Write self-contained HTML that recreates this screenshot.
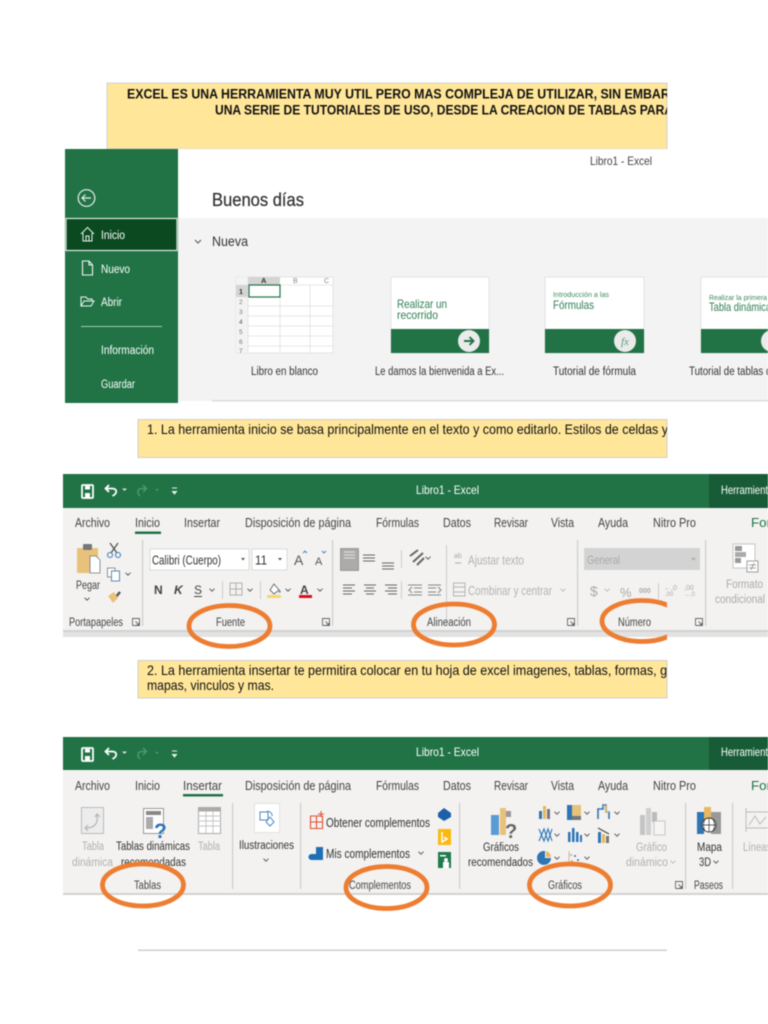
<!DOCTYPE html>
<html lang="es">
<head>
<meta charset="utf-8">
<title>Excel</title>
<style>
html,body{margin:0;padding:0;background:#fff;width:768px;height:1024px;overflow:hidden}
svg{display:block;position:absolute;left:0;top:0;filter:blur(.5px)}
text{font-family:"Liberation Sans",sans-serif;fill:#444;font-size:12px}
text.y{fill:#111;font-size:13.5px}
.w{fill:#fff}
.t{font-size:12.5px;fill:#444}
</style>
</head>
<body>
<svg width="768" height="1024" viewBox="0 0 768 1024" xmlns="http://www.w3.org/2000/svg">
<defs>
<clipPath id="cp"><rect x="0" y="0" width="667" height="1024"/></clipPath>
<path id="c" d="M-2.5-1.300L0 1.200L2.500-1.300" fill="none" stroke="#555" stroke-width="1"/>
<path id="cd" d="M-2.5-1.300L0 1.200L2.500-1.300" fill="none" stroke="#bbb" stroke-width="1"/>
<g id="l" fill="none" stroke="#666" stroke-width=".9"><path d="M-3.500 3.500V-3.500H3.500V3.500H-3.500"/><path d="M-.5-.5L3 3M3 .5V3H.5"/></g>
<g id="qa">
<rect x="82" y="0" width="11" height="13" rx="1" fill="none" stroke="#fff" stroke-width="1.800"/>
<rect x="85" y="1" width="5" height="3.500" fill="#fff"/>
<rect x="85" y="8" width="5" height="5" fill="#fff"/>
<path d="M109 0L105.500 3.500L109 7M106 3.500H112C117 3.500 118 8 112.500 11" fill="none" stroke="#fff" stroke-width="1.800"/>
<path d="M122 3.500L124.500 6L127 3.500" fill="#cfe0d6"/>
<path d="M143 0L146.500 3.500L143 7M146 3.500H142C137 3.500 137 8 140 11" fill="none" stroke="#4f9670" stroke-width="1.500"/>
<path d="M155 4L157 6L159 4" fill="#4f9670"/>
<path d="M172 3H177M172 6L174.500 9L177 6" fill="#e8f0eb" stroke="#e8f0eb" stroke-width=".9"/>
</g>
</defs>

<!-- TOP BOX -->
<rect x="107" y="83" width="560" height="66" fill="#ffe699" stroke="#d2d2d2" stroke-width="1"/>
<g clip-path="url(#cp)">
<text class="y" x="127" y="98.500" font-weight="700" textLength="562" lengthAdjust="spacingAndGlyphs">EXCEL ES UNA HERRAMIENTA MUY UTIL PERO MAS COMPLEJA DE UTILIZAR, SIN EMBARGO</text>
<text class="y" x="215" y="114.500" font-weight="700" textLength="458" lengthAdjust="spacingAndGlyphs">UNA SERIE DE TUTORIALES DE USO, DESDE LA CREACION DE TABLAS PARA</text>
</g>

<!-- START SCREEN -->
<rect x="178" y="149" width="590" height="69" fill="#fff"/>
<rect x="178" y="218" width="590" height="183" fill="#f3f3f3"/>
<rect x="212" y="400" width="556" height="1.500" fill="#dcdcdc"/>
<rect x="65" y="149" width="113" height="254" fill="#217346"/>
<rect x="66" y="218.500" width="111" height="32" fill="#0b4a20" stroke="#dfeae3" stroke-width="1.200"/>
<circle cx="86.500" cy="198" r="8.300" fill="none" stroke="#e8f0eb" stroke-width="1.200"/>
<path d="M91 198H82M85.500 194.500L82 198L85.500 201.500" fill="none" stroke="#e8f0eb" stroke-width="1.200"/>
<path d="M81 234L87.500 227.500L94 234M83 233V241H92V233M86 241V236H89V241" fill="none" stroke="#e8f0eb" stroke-width="1"/>
<text class="w" x="101" y="239" textLength="24" lengthAdjust="spacingAndGlyphs" style="font-size:11.500px;fill:#fff">Inicio</text>
<path d="M82.500 261H89L92.500 265V275H82.500ZM89 261V265H92.500" fill="none" stroke="#f0f5f2" stroke-width="1.100"/>
<text class="w" x="101" y="273" textLength="29" lengthAdjust="spacingAndGlyphs" style="font-size:11.500px;fill:#fff">Nuevo</text>
<path d="M81 306V297H86L87.500 299H92V301M81 306L84 301H94L91 306Z" fill="none" stroke="#f0f5f2" stroke-width="1"/>
<text class="w" x="101" y="306" textLength="21" lengthAdjust="spacingAndGlyphs" style="font-size:11.500px;fill:#fff">Abrir</text>
<rect x="81" y="326" width="81" height="1" fill="#a5c8b3"/>
<text class="w" x="101" y="354" textLength="53" lengthAdjust="spacingAndGlyphs" style="font-size:11.500px;fill:#fff">Información</text>
<text class="w" x="101" y="388" textLength="34" lengthAdjust="spacingAndGlyphs" style="font-size:11.500px;fill:#fff">Guardar</text>

<text x="590" y="165" textLength="62" lengthAdjust="spacingAndGlyphs" style="font-size:12px;fill:#444">Libro1  -  Excel</text>
<text x="212" y="206" textLength="92" lengthAdjust="spacingAndGlyphs" style="font-size:18.500px;fill:#333;stroke:#333;stroke-width:.25px">Buenos días</text>
<path d="M195 240L198 243L201 240" fill="none" stroke="#555" stroke-width="1"/>
<text x="212" y="246" textLength="36" lengthAdjust="spacingAndGlyphs" style="font-size:14px;fill:#333">Nueva</text>

<!-- Card 1 blank -->
<rect x="236" y="277" width="97" height="76" fill="#fff" stroke="#dedede" stroke-width=".8"/>
<rect x="236" y="277" width="12" height="76" fill="#f3f3f3"/>
<rect x="248" y="277" width="32" height="8" fill="#d4d4d4"/>
<rect x="236" y="285" width="12" height="12" fill="#d4d4d4"/>
<g stroke="#e0e0e0" stroke-width=".8"><path d="M248 306H333M248 316H333M248 326H333M248 336H333M248 346H333M280 285V353M310 285V353M236 285H333M248 277V353"/></g>
<rect x="249" y="285" width="31" height="12" fill="#fff" stroke="#217346" stroke-width="1.200"/>
<text x="261" y="283" style="font-size:7.500px;fill:#333" font-weight="700">A</text>
<text x="293" y="283" style="font-size:7px;fill:#888">B</text>
<text x="324" y="283" style="font-size:7px;fill:#888">C</text>
<text x="239" y="294" style="font-size:7px;fill:#333" font-weight="700">1</text>
<text x="239" y="304" style="font-size:6.500px;fill:#777">2</text>
<text x="239" y="314" style="font-size:6.500px;fill:#777">3</text>
<text x="239" y="324" style="font-size:6.500px;fill:#555">4</text>
<text x="239" y="334" style="font-size:6.500px;fill:#777">5</text>
<text x="239" y="344" style="font-size:6.500px;fill:#777">6</text>
<text x="239" y="353" style="font-size:6.500px;fill:#777">7</text>
<text x="251" y="375" textLength="67" lengthAdjust="spacingAndGlyphs" style="font-size:11.500px;fill:#333">Libro en blanco</text>

<!-- Card 2 -->
<rect x="391" y="277" width="98" height="76" fill="#fff" stroke="#dedede" stroke-width=".8"/>
<rect x="391" y="329" width="98" height="24" fill="#217346"/>
<text x="397" y="308" textLength="50" lengthAdjust="spacingAndGlyphs" style="font-size:12px;fill:#2f7d52">Realizar un</text>
<text x="397" y="319" textLength="41" lengthAdjust="spacingAndGlyphs" style="font-size:12px;fill:#2f7d52">recorrido</text>
<circle cx="469" cy="341" r="11" fill="#ebebeb"/>
<path d="M464 341H473M469.500 337L473.500 341L469.500 345" fill="none" stroke="#217346" stroke-width="1.900"/>
<text x="375" y="375" textLength="129" lengthAdjust="spacingAndGlyphs" style="font-size:11.500px;fill:#333">Le damos la bienvenida a Ex...</text>

<!-- Card 3 -->
<rect x="545" y="277" width="99" height="76" fill="#fff" stroke="#dedede" stroke-width=".8"/>
<rect x="545" y="329" width="99" height="24" fill="#217346"/>
<text x="553" y="297" textLength="56" lengthAdjust="spacingAndGlyphs" style="font-size:7px;fill:#3d8a5f">Introducción a las</text>
<text x="553" y="309" textLength="41" lengthAdjust="spacingAndGlyphs" style="font-size:12px;fill:#2f7d52">Fórmulas</text>
<circle cx="625" cy="341" r="11" fill="#ebebeb"/>
<text x="621" y="345" font-style="italic" style="font-family:'Liberation Serif',serif;font-size:11px;fill:#5a9a76">fx</text>
<text x="553" y="375" textLength="83" lengthAdjust="spacingAndGlyphs" style="font-size:11.500px;fill:#333">Tutorial de fórmula</text>

<!-- Card 4 -->
<rect x="701" y="277" width="80" height="76" fill="#fff" stroke="#dedede" stroke-width=".8"/>
<rect x="701" y="329" width="80" height="24" fill="#217346"/>
<circle cx="772" cy="341" r="11" fill="#ebebeb"/>
<text x="709" y="300" textLength="58" lengthAdjust="spacingAndGlyphs" style="font-size:7px;fill:#3d8a5f">Realizar la primera</text>
<text x="709" y="311" textLength="62" lengthAdjust="spacingAndGlyphs" style="font-size:12px;fill:#2f7d52">Tabla dinámica</text>
<text x="689" y="375" textLength="90" lengthAdjust="spacingAndGlyphs" style="font-size:11.500px;fill:#333">Tutorial de tablas din</text>

<!-- BOX 2 -->
<rect x="138" y="419.500" width="529" height="38" fill="#ffe699" stroke="#cfcfcf" stroke-width="1"/>
<g clip-path="url(#cp)">
<text class="y" x="147" y="434" textLength="521" lengthAdjust="spacingAndGlyphs" style="font-size:14px">1. La herramienta inicio se basa principalmente en el texto y como editarlo. Estilos de celdas y</text>
</g>

<!-- RIBBON 1 -->
<rect x="63" y="474" width="705" height="34" fill="#217346"/>
<rect x="709" y="474" width="59" height="34" fill="#185c37"/>
<use href="#qa" transform="translate(0 485)"/>
<text x="416" y="494" textLength="63" lengthAdjust="spacingAndGlyphs" style="font-size:12px;fill:#fff">Libro1  -  Excel</text>
<text x="721" y="494" textLength="47" lengthAdjust="spacingAndGlyphs" style="font-size:12px;fill:#fff">Herramient</text>
<rect x="63" y="508" width="705" height="122" fill="#f3f2f1"/>
<rect x="63" y="630" width="705" height="2" fill="#d2d2d2"/>
<rect x="63" y="632" width="705" height="5" fill="#e2e2e2"/>
<text class="t" x="75" y="527" textLength="35" lengthAdjust="spacingAndGlyphs">Archivo</text>
<text class="t" x="135" y="527" textLength="25" lengthAdjust="spacingAndGlyphs">Inicio</text>
<text class="t" x="184" y="527" textLength="36" lengthAdjust="spacingAndGlyphs">Insertar</text>
<text class="t" x="245" y="527" textLength="106" lengthAdjust="spacingAndGlyphs">Disposición de página</text>
<text class="t" x="376" y="527" textLength="43" lengthAdjust="spacingAndGlyphs">Fórmulas</text>
<text class="t" x="443" y="527" textLength="28" lengthAdjust="spacingAndGlyphs">Datos</text>
<text class="t" x="494" y="527" textLength="34" lengthAdjust="spacingAndGlyphs">Revisar</text>
<text class="t" x="551" y="527" textLength="23" lengthAdjust="spacingAndGlyphs">Vista</text>
<text class="t" x="598" y="527" textLength="30" lengthAdjust="spacingAndGlyphs">Ayuda</text>
<text class="t" x="653" y="527" textLength="43" lengthAdjust="spacingAndGlyphs">Nitro Pro</text>
<text x="751" y="527" textLength="20" lengthAdjust="spacingAndGlyphs" style="font-size:12.500px;fill:#217346">For</text>
<rect x="135" y="531.500" width="26" height="2.500" fill="#217346"/>
<g fill="#cdcdcd"><rect x="142" y="540" width="1.200" height="86"/><rect x="332" y="540" width="1.200" height="86"/><rect x="577" y="540" width="1.200" height="86"/><rect x="705" y="540" width="1.200" height="86"/><rect x="446" y="545" width="1" height="80"/><rect x="401" y="550" width="1" height="18"/><rect x="401" y="581" width="1" height="18"/><rect x="222" y="581" width="1" height="18"/><rect x="260" y="581" width="1" height="18"/><rect x="658" y="583" width="1" height="16"/></g>

<!-- clipboard -->
<rect x="77" y="548" width="21" height="25" rx="1" fill="#e8c27a"/>
<rect x="83" y="544" width="9" height="6" rx="1" fill="#777"/>
<path d="M90 556H96L100 560V573H90Z" fill="#fff" stroke="#777" stroke-width=".8"/>
<text x="76" y="589" textLength="24" lengthAdjust="spacingAndGlyphs" style="font-size:11.500px">Pegar</text>
<use href="#c" x="87" y="599"/>
<path d="M110 543L117 553M118 543L111 553" stroke="#555" stroke-width="1.300" fill="none"/>
<circle cx="110" cy="555" r="2.500" fill="none" stroke="#3f7fbf" stroke-width="1.100"/><circle cx="118" cy="555" r="2.500" fill="none" stroke="#3f7fbf" stroke-width="1.100"/>
<rect x="107.500" y="568" width="7.500" height="9" fill="#fff" stroke="#777" stroke-width=".8"/><rect x="111.500" y="571" width="8" height="10" fill="#fff" stroke="#4a7fb5" stroke-width=".9"/>
<use href="#c" x="128" y="574"/>
<path d="M115 598L120 592" stroke="#555" stroke-width="2.500"/><path d="M108 596L114 592L118 598L113 603Z" fill="#e8c27a"/>
<text x="69" y="626" textLength="54" lengthAdjust="spacingAndGlyphs" style="font-size:11.500px">Portapapeles</text>
<use href="#l" x="136" y="622"/>

<!-- font -->
<rect x="150" y="549" width="99" height="21" fill="#fff" stroke="#d4d4d4" stroke-width=".8"/>
<rect x="252" y="549" width="35" height="21" fill="#fff" stroke="#d4d4d4" stroke-width=".8"/>
<text x="152" y="564.500" textLength="69" lengthAdjust="spacingAndGlyphs" style="font-size:12.500px;fill:#333">Calibri (Cuerpo)</text>
<text x="255" y="564.500" textLength="12" lengthAdjust="spacingAndGlyphs" style="font-size:12.500px;fill:#333">11</text>
<path d="M241 558H245L243 560.500ZM278 558H282L280 560.500Z" fill="#555"/>
<text x="294" y="565" style="font-size:14px;fill:#555">A</text>
<text x="315" y="565" style="font-size:11px;fill:#555">A</text>
<path d="M303 553L305 551L307 553M322 551L324 553L326 551" fill="none" stroke="#3f7fbf" stroke-width=".9"/>
<text x="154" y="594" font-weight="700" style="font-size:12px;fill:#444">N</text>
<text x="174" y="594" font-weight="700" font-style="italic" style="font-size:12px;fill:#444">K</text>
<text x="194" y="594" style="font-size:12px;fill:#444">S</text>
<rect x="194" y="596" width="8" height="1" fill="#444"/>
<use href="#c" x="212" y="590"/>
<path d="M230 583H242V595H230ZM236 583V595M230 589H242" fill="none" stroke="#b0b0b0" stroke-width="1"/>
<use href="#c" x="250" y="590"/>
<path d="M270 590L274 584L279 590L274 594Z" fill="#fff" stroke="#666" stroke-width=".9"/><path d="M279 589L281 592L279 593Z" fill="#3f7fbf"/>
<rect x="267" y="595" width="14" height="3" fill="#f5d76e"/>
<use href="#c" x="288" y="590"/>
<text x="300" y="594" font-weight="700" style="font-size:12px;fill:#444">A</text>
<rect x="299" y="595" width="13" height="3" fill="#d80f1e"/>
<use href="#c" x="320" y="590"/>
<text x="216" y="626" textLength="29" lengthAdjust="spacingAndGlyphs" style="font-size:11.500px">Fuente</text>
<use href="#l" x="326" y="622"/>

<!-- align -->
<rect x="340.500" y="548.500" width="18" height="22" fill="#ababab" stroke="#8e8e8e" stroke-width=".8"/>
<g stroke="#666" stroke-width="1" fill="none">
<path d="M344 552H355M344 555H355M344 558H355" stroke="#e3e3e3"/>
<path d="M363 555H375M363 558H375M363 561H375"/>
<path d="M382 563H394M382 566H394M382 569H394"/>
<path d="M343 585H355M343 588H352M343 591H355M343 594H352"/>
<path d="M364 585H376M366 588H374M364 591H376M366 594H374"/>
<path d="M385 585H397M388 588H397M385 591H397M388 594H397"/>
</g>
<path d="M410 556L418 550M413 562L423 553M417 565L424 558" stroke="#666" stroke-width="2"/>
<use href="#c" x="428" y="558"/>
<path d="M408 585H422M408 595H422M414 588H422M414 592H422M412 587L409 590L412 593" fill="none" stroke="#888" stroke-width="1"/>
<path d="M428 585H441M428 595H441M428 588H436M428 592H436M438 587L441 590L438 593" fill="none" stroke="#888" stroke-width="1"/>
<text x="454" y="558" style="font-size:7px;fill:#aaa">ab</text><path d="M455 563H461" stroke="#aaa" stroke-width="1"/>
<text x="468" y="564.500" textLength="56" lengthAdjust="spacingAndGlyphs" style="font-size:12.500px;fill:#b3b3b3">Ajustar texto</text>
<path d="M453.500 583H465V596H453.500ZM453.500 587H465M453.500 592H465" fill="none" stroke="#b5b5b5" stroke-width="1"/>
<text x="468" y="595" textLength="84" lengthAdjust="spacingAndGlyphs" style="font-size:12.500px;fill:#b3b3b3">Combinar y centrar</text>
<use href="#cd" x="563" y="590"/>
<text x="427" y="626" textLength="44" lengthAdjust="spacingAndGlyphs" style="font-size:11.500px">Alineación</text>
<use href="#l" x="571" y="622"/>

<!-- number -->
<rect x="584" y="548" width="116" height="22" fill="#d3d3d3"/>
<text x="587" y="564" textLength="33" lengthAdjust="spacingAndGlyphs" style="font-size:12px;fill:#a9a9a9">General</text>
<path d="M691 558H696L693.500 560.500Z" fill="#aaa"/>
<text x="590" y="596" style="font-size:14px;fill:#aaa">$</text>
<use href="#cd" x="607" y="590"/>
<text x="620" y="597" style="font-size:13px;fill:#aaa">%</text>
<text x="639" y="593" font-weight="700" style="font-size:7px;fill:#aaa">000</text>
<text x="664" y="590" style="font-size:7px;fill:#aaa">←,0</text>
<text x="665" y="596" style="font-size:6px;fill:#aaa">,00</text>
<text x="684" y="590" style="font-size:7px;fill:#aaa">,00</text>
<text x="684" y="596" style="font-size:6px;fill:#aaa">→,0</text>
<text x="618" y="626" textLength="33" lengthAdjust="spacingAndGlyphs" style="font-size:11.500px">Número</text>
<use href="#l" x="699" y="622"/>

<!-- Formato -->
<rect x="733" y="544" width="22" height="24" fill="#fff" stroke="#bbb" stroke-width=".8"/>
<rect x="735" y="546" width="7" height="5" fill="#999"/><rect x="735" y="552" width="11" height="5" fill="#aaa"/><rect x="735" y="558" width="6" height="5" fill="#999"/>
<rect x="747" y="561" width="11" height="11" fill="#fff" stroke="#888" stroke-width=".8"/>
<path d="M749 565H756M749 568H756M754 563L751 570" stroke="#888" stroke-width=".8"/>
<text x="726" y="588" textLength="37" lengthAdjust="spacingAndGlyphs" style="font-size:11.500px;fill:#aaa">Formato</text>
<text x="715" y="603" textLength="50" lengthAdjust="spacingAndGlyphs" style="font-size:11.500px;fill:#aaa">condicional</text>

<!-- ellipses 1 -->
<ellipse cx="229.500" cy="626" rx="40.500" ry="20.500" fill="none" stroke="#ed7d31" stroke-width="4.800"/>
<ellipse cx="454" cy="624.500" rx="40.500" ry="20.500" fill="none" stroke="#ed7d31" stroke-width="4.800"/>
<g clip-path="url(#cp)"><ellipse cx="642" cy="621" rx="40" ry="20.500" fill="none" stroke="#ed7d31" stroke-width="4.800"/></g>

<!-- BOX 3 -->
<rect x="138" y="660.500" width="529" height="37.500" fill="#ffe699" stroke="#cfcfcf" stroke-width="1"/>
<g clip-path="url(#cp)">
<text class="y" x="147" y="675" textLength="557" lengthAdjust="spacingAndGlyphs" style="font-size:14px">2. La herramienta insertar te permitira colocar en tu hoja de excel imagenes, tablas, formas, graficos</text>
<text class="y" x="147" y="690" textLength="127" lengthAdjust="spacingAndGlyphs" style="font-size:14px">mapas, vinculos y mas.</text>
</g>

<!-- RIBBON 2 -->
<rect x="63" y="737" width="705" height="33" fill="#217346"/>
<rect x="709" y="737" width="59" height="33" fill="#185c37"/>
<use href="#qa" transform="translate(0 748)"/>
<text x="416" y="756" textLength="63" lengthAdjust="spacingAndGlyphs" style="font-size:12px;fill:#fff">Libro1  -  Excel</text>
<text x="721" y="756" textLength="47" lengthAdjust="spacingAndGlyphs" style="font-size:12px;fill:#fff">Herramient</text>
<rect x="63" y="770" width="705" height="123" fill="#f3f2f1"/>
<rect x="63" y="893" width="705" height="2" fill="#d2d2d2"/>
<text class="t" x="75" y="790" textLength="35" lengthAdjust="spacingAndGlyphs">Archivo</text>
<text class="t" x="135" y="790" textLength="25" lengthAdjust="spacingAndGlyphs">Inicio</text>
<text class="t" x="183" y="790" textLength="39" lengthAdjust="spacingAndGlyphs">Insertar</text>
<text class="t" x="245" y="790" textLength="106" lengthAdjust="spacingAndGlyphs">Disposición de página</text>
<text class="t" x="376" y="790" textLength="43" lengthAdjust="spacingAndGlyphs">Fórmulas</text>
<text class="t" x="443" y="790" textLength="28" lengthAdjust="spacingAndGlyphs">Datos</text>
<text class="t" x="494" y="790" textLength="34" lengthAdjust="spacingAndGlyphs">Revisar</text>
<text class="t" x="551" y="790" textLength="23" lengthAdjust="spacingAndGlyphs">Vista</text>
<text class="t" x="598" y="790" textLength="30" lengthAdjust="spacingAndGlyphs">Ayuda</text>
<text class="t" x="653" y="790" textLength="43" lengthAdjust="spacingAndGlyphs">Nitro Pro</text>
<text x="751" y="790" textLength="20" lengthAdjust="spacingAndGlyphs" style="font-size:12.500px;fill:#217346">For</text>
<rect x="183" y="794" width="40" height="2.500" fill="#217346"/>
<g fill="#cdcdcd"><rect x="232" y="803" width="1.200" height="86"/><rect x="300" y="803" width="1.200" height="86"/><rect x="459" y="803" width="1.200" height="86"/><rect x="685" y="803" width="1.200" height="86"/><rect x="732" y="803" width="1.200" height="86"/></g>

<!-- tablas -->
<rect x="81.500" y="807.500" width="22" height="26" fill="#ececec" stroke="#bbb" stroke-width="1"/>
<path d="M86 828C96 828 98 822 97 815M95 817L97 814L100 817M88 825L85 828L88 831" fill="none" stroke="#b5b5b5" stroke-width="1.200"/>
<text x="82" y="850" textLength="22" lengthAdjust="spacingAndGlyphs" style="font-size:11.500px;fill:#b0b0b0">Tabla</text>
<text x="72" y="866" textLength="41" lengthAdjust="spacingAndGlyphs" style="font-size:11.500px;fill:#b0b0b0">dinámica</text>
<rect x="143.500" y="808.500" width="20" height="25" fill="#fff" stroke="#999" stroke-width="1"/>
<rect x="146" y="811" width="15" height="4" fill="#888"/><rect x="146" y="817" width="7" height="12" fill="#aaa"/>
<text x="154" y="838" font-weight="700" style="font-size:21px;fill:#2e75b6">?</text>
<text x="116" y="850" textLength="74" lengthAdjust="spacingAndGlyphs" style="font-size:11.500px;fill:#333">Tablas dinámicas</text>
<text x="121" y="866" textLength="65" lengthAdjust="spacingAndGlyphs" style="font-size:11.500px;fill:#333">recomendadas</text>
<rect x="198.500" y="807.500" width="22" height="26" fill="#fff" stroke="#aaa" stroke-width="1"/>
<rect x="198.500" y="807.500" width="22" height="4" fill="#aaa"/>
<path d="M198 816H221M198 821H221M198 826H221M206 811V833M213 811V833" stroke="#c4c4c4" stroke-width=".9"/>
<text x="198" y="850" textLength="22" lengthAdjust="spacingAndGlyphs" style="font-size:11.500px;fill:#b0b0b0">Tabla</text>
<text x="134" y="889" textLength="27" lengthAdjust="spacingAndGlyphs" style="font-size:11.500px">Tablas</text>

<!-- ilustraciones -->
<rect x="254.500" y="803.500" width="25" height="29" fill="#fff" stroke="#dcdcdc" stroke-width=".8"/>
<path d="M260 812H268V820H260ZM266 822L270 817L274 822L270 826Z" fill="none" stroke="#4a86c5" stroke-width="1"/>
<path d="M266 812A4 4 0 0 1 272 816" fill="none" stroke="#4a86c5" stroke-width="1"/>
<text x="239" y="849" textLength="55" lengthAdjust="spacingAndGlyphs" style="font-size:11.500px;fill:#333">Ilustraciones</text>
<use href="#c" x="266" y="860"/>

<!-- complementos -->
<path d="M310.500 816H322.500V828.500H310.500ZM316.500 816V828.500M310.500 822H322.500" fill="none" stroke="#e2502f" stroke-width="1.100"/>
<path d="M321 811V817M318 814H324" stroke="#e2502f" stroke-width="1"/>
<text x="326" y="827" textLength="104" lengthAdjust="spacingAndGlyphs" style="font-size:12.500px;fill:#333">Obtener complementos</text>
<path d="M316 847H323V860H312A2.500 2.500 0 0 1 311 854H316Z" fill="#1f6fb5"/>
<text x="326" y="858" textLength="84" lengthAdjust="spacingAndGlyphs" style="font-size:12.500px;fill:#333">Mis complementos</text>
<use href="#c" x="421" y="853"/>
<text x="349" y="889" textLength="62" lengthAdjust="spacingAndGlyphs" style="font-size:11.500px">Complementos</text>
<path d="M438 813L444 808L451 813V817L444 821L438 817Z" fill="#1e5fa8"/>
<rect x="438" y="829" width="13" height="16" fill="#fbb80e"/><path d="M442 832V842L447 839L444 837" fill="none" stroke="#fff" stroke-width="1.500"/>
<rect x="438" y="852" width="13" height="16" fill="#1f7a4d"/><rect x="440" y="855" width="6" height="1.500" fill="#fff"/><circle cx="446" cy="860" r="2" fill="#fff"/><rect x="443" y="862" width="6" height="6" fill="#fff"/>

<!-- graficos -->
<rect x="491" y="815" width="8" height="20" fill="#5b9bd5"/>
<rect x="500" y="808" width="6" height="27" fill="#e8c27a"/>
<rect x="506" y="811" width="5" height="6" fill="#999"/>
<text x="505" y="838" font-weight="700" style="font-size:20px;fill:#666">?</text>
<text x="483" y="851" textLength="36" lengthAdjust="spacingAndGlyphs" style="font-size:11.500px;fill:#333">Gráficos</text>
<text x="468" y="866" textLength="65" lengthAdjust="spacingAndGlyphs" style="font-size:11.500px;fill:#333">recomendados</text>
<rect x="539" y="811" width="3" height="8" fill="#2e75b6"/><rect x="543" y="806" width="3" height="13" fill="#e8b85e"/><rect x="547" y="809" width="3" height="10" fill="#777"/>
<use href="#c" x="557" y="813"/>
<rect x="567" y="805" width="5" height="15" fill="#2e75b6"/><rect x="572" y="805" width="9" height="11" fill="#e8c27a"/><rect x="572" y="816" width="9" height="4" fill="#777"/>
<use href="#c" x="587" y="813"/>
<path d="M598 819V809H603V805H606V812H609V819" fill="none" stroke="#2e75b6" stroke-width="1.600"/><path d="M603 806H606V812H609" fill="none" stroke="#e8b85e" stroke-width="1.300"/>
<use href="#c" x="617" y="813"/>
<path d="M539 829L544 841L548 829L552 841M539 841L544 829L548 841L552 829" fill="none" stroke="#2e75b6" stroke-width="1.100"/>
<use href="#c" x="557" y="835"/>
<rect x="568" y="832" width="2.500" height="10" fill="#2e75b6"/><rect x="572" y="828" width="2.500" height="14" fill="#2e75b6"/><rect x="576" y="832" width="2.500" height="10" fill="#2e75b6"/><rect x="580" y="835" width="2" height="7" fill="#2e75b6"/>
<use href="#c" x="587" y="835"/>
<rect x="598" y="832" width="3" height="11" fill="#2e75b6"/><rect x="602" y="834" width="3" height="9" fill="#e8b85e"/><rect x="606" y="836" width="3" height="7" fill="#777"/><path d="M598 828L609 834" stroke="#444" stroke-width="1"/>
<use href="#c" x="617" y="835"/>
<path d="M545 851A7 7 0 1 0 551 858H545Z" fill="#2e75b6"/><path d="M546 851A7 7 0 0 1 551 857H546Z" fill="#e8b85e"/>
<use href="#c" x="557" y="858"/>
<path d="M569 851V864" stroke="#aaa" stroke-width=".8"/><circle cx="572" cy="861" r="1" fill="#e8a23e"/><circle cx="575" cy="856" r="1" fill="#2e75b6"/><circle cx="578" cy="860" r="1" fill="#2e75b6"/><circle cx="571" cy="855" r="1" fill="#e8a23e"/>
<use href="#c" x="587" y="858"/>
<text x="548" y="889" textLength="34" lengthAdjust="spacingAndGlyphs" style="font-size:11.500px">Gráficos</text>
<rect x="640" y="815" width="5" height="20" fill="#c4c4c4"/><rect x="646" y="808" width="5" height="27" fill="#cfcfcf"/><rect x="652" y="812" width="5" height="10" fill="#bbb"/>
<rect x="654" y="821" width="11" height="14" fill="#f5f5f5" stroke="#bbb" stroke-width=".8"/>
<text x="636" y="851" textLength="31" lengthAdjust="spacingAndGlyphs" style="font-size:11.500px;fill:#b0b0b0">Gráfico</text>
<text x="626" y="866" textLength="42" lengthAdjust="spacingAndGlyphs" style="font-size:11.500px;fill:#b0b0b0">dinámico</text>
<use href="#cd" x="673" y="862"/>
<use href="#l" x="679" y="885"/>

<!-- mapa -->
<rect x="697" y="812" width="7" height="22" fill="#2e75b6"/><rect x="704" y="807" width="7" height="20" fill="#e8b85e"/><rect x="711" y="812" width="10" height="22" fill="#999"/>
<circle cx="709" cy="825" r="7" fill="#fff" stroke="#333" stroke-width=".9"/><path d="M702 825H716M709 818V832M705 819C703 824 703 827 705 831M713 819C715 824 715 827 713 831" fill="none" stroke="#333" stroke-width=".7"/>
<text x="697" y="851" textLength="25" lengthAdjust="spacingAndGlyphs" style="font-size:11.500px;fill:#333">Mapa</text>
<text x="699" y="866" textLength="12" lengthAdjust="spacingAndGlyphs" style="font-size:11.500px;fill:#333">3D</text>
<use href="#c" x="716" y="862"/>
<text x="694" y="889" textLength="29" lengthAdjust="spacingAndGlyphs" style="font-size:11.500px">Paseos</text>

<!-- lineas -->
<path d="M746 808V832M746 812H768M746 828H768M749 825L755 816L760 824L766 817" fill="none" stroke="#bbb" stroke-width="1"/>
<text x="743" y="851" textLength="28" lengthAdjust="spacingAndGlyphs" style="font-size:11.500px;fill:#b0b0b0">Líneas</text>

<!-- ellipses 2 -->
<ellipse cx="143" cy="885" rx="40.500" ry="21" fill="none" stroke="#ed7d31" stroke-width="4.800"/>
<ellipse cx="386.500" cy="887.500" rx="40.500" ry="21" fill="none" stroke="#ed7d31" stroke-width="4.800"/>
<ellipse cx="570" cy="885" rx="40.500" ry="21" fill="none" stroke="#ed7d31" stroke-width="4.800"/>

<!-- bottom line -->
<rect x="138" y="949.500" width="529" height="1.500" fill="#cfcfcf"/>
</svg>
</body>
</html>
